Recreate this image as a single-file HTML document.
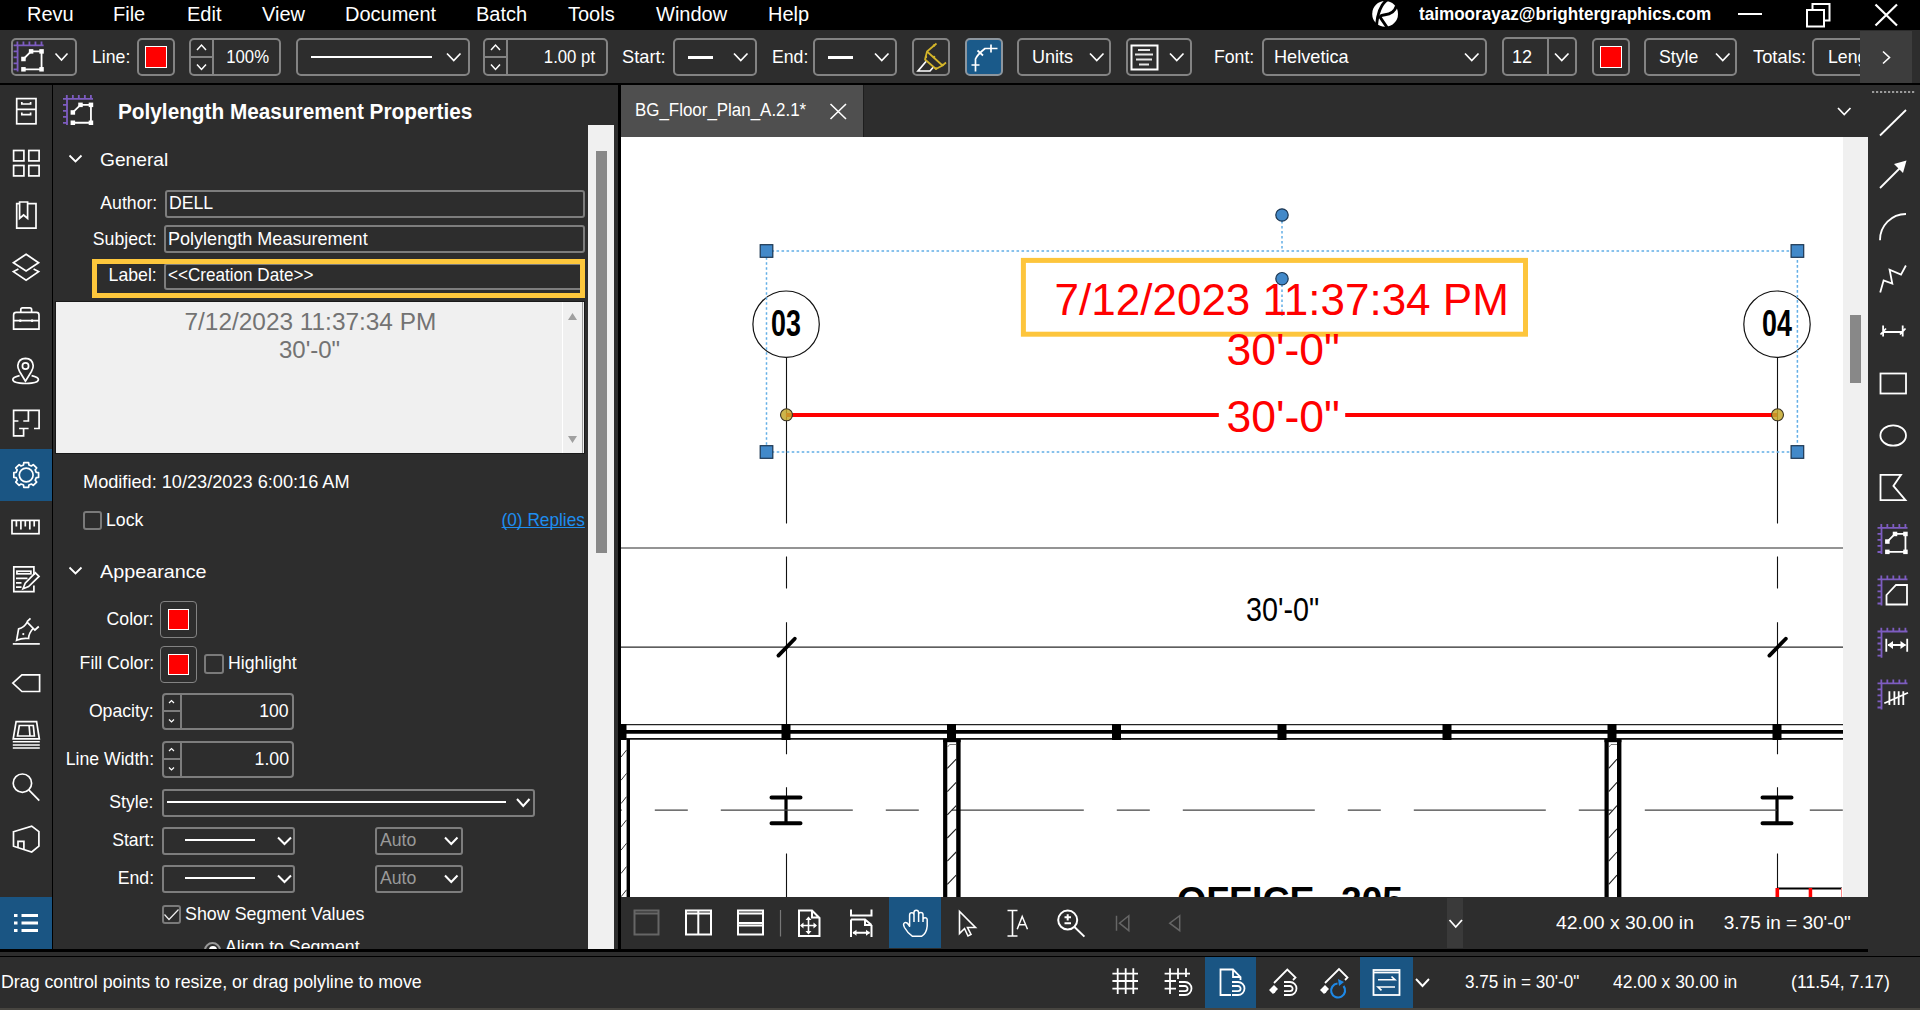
<!DOCTYPE html>
<html><head><meta charset="utf-8">
<style>
*{box-sizing:border-box;margin:0;padding:0}
html,body{width:1920px;height:1010px;overflow:hidden;background:#2d2d2d;font-family:"Liberation Sans",sans-serif;color:#fff;position:relative}
.a{position:absolute}
.t{position:absolute;white-space:nowrap;line-height:1}
svg{position:absolute;overflow:visible}
.btn{position:absolute;border:2px solid #838383;border-radius:5px}
.inp{position:absolute;border:2px solid #7d7d7d;border-radius:3px;background:#2d2d2d}
</style></head><body>
<div class="a" style="left:0px;top:0px;width:1920px;height:30px;background:#000;"></div>
<div class="t" style="left:27px;top:3.7px;font-size:20px;">Revu</div>
<div class="t" style="left:113px;top:3.7px;font-size:20px;">File</div>
<div class="t" style="left:187px;top:3.7px;font-size:20px;">Edit</div>
<div class="t" style="left:262px;top:3.7px;font-size:20px;">View</div>
<div class="t" style="left:345px;top:3.7px;font-size:20px;">Document</div>
<div class="t" style="left:476px;top:3.7px;font-size:20px;">Batch</div>
<div class="t" style="left:568px;top:3.7px;font-size:20px;">Tools</div>
<div class="t" style="left:656px;top:3.7px;font-size:20px;">Window</div>
<div class="t" style="left:768px;top:3.7px;font-size:20px;">Help</div>
<div class="t" style="left:1419px;top:4.4px;font-size:19px;font-weight:bold;transform:scaleX(0.9);transform-origin:0 0;">taimoorayaz@brightergraphics.com</div>
<svg style="left:0;top:0" width="1920" height="1010">
 <path d="M1738 14 H1762" stroke="#fff" stroke-width="2"/>
 <rect x="1807" y="10" width="17" height="16.5" stroke="#fff" stroke-width="2" fill="none"/>
 <path d="M1812.5 9 V4 H1829.5 V20.5 H1824.5" stroke="#fff" stroke-width="2" fill="none"/>
 <path d="M1875.5 4.5 L1897 25.5 M1897 4.5 L1875.5 25.5" stroke="#fff" stroke-width="2.2"/>
 <circle cx="1385.1" cy="13.9" r="12.9" fill="#fff"/>
 <path d="M1387.5 -0.5 C1381 4 1377.5 12 1376.5 26" stroke="#000" stroke-width="3" fill="none"/>
 <path d="M1396.5 6 C1394.5 12 1391 14.3 1385 14.8 C1382 15.1 1380.5 15.8 1380 17 L1387.5 28" stroke="#000" stroke-width="2.9" fill="none"/>
</svg>
<div class="a" style="left:0px;top:30px;width:1920px;height:53px;background:#2d2d2d;"></div>
<div class="a" style="left:0px;top:83px;width:1920px;height:2px;background:#000;"></div>
<div class="btn" style="left:11px;top:38px;width:66px;height:38px;"></div>
<svg style="left:0;top:0" width="1920" height="1010">
<g transform="translate(-49.4 -53.45)"><path d="M63 98.8 H93 M67 98 V125 M66.8 95 V98.5 M72.85 95 V98.5 M78.8 95 V98.5 M84.85 95 V98.5 M90.9 95 V98.5 M63 104.85 H67 M63 110.8 H67 M63 116.85 H67 M63 122.9 H67" stroke="#7d5cc0" stroke-width="1.8" fill="none"/></g><g transform="translate(-49.4 -53.45)"><path d="M72.85 112.45 L80.5 104.85 H90.95 V122.75 H72.85" stroke="#fff" stroke-width="1.8" fill="none"/><g fill="#fff"><rect x="70.6" y="110.2" width="4.5" height="4.5"/><rect x="78.25" y="102.6" width="4.5" height="4.5"/><rect x="88.7" y="102.6" width="4.5" height="4.5"/><rect x="88.7" y="120.5" width="4.5" height="4.5"/><rect x="70.6" y="120.5" width="4.5" height="4.5"/></g></g>
<path d="M55.5 53.5 L61.5 60.0 L67.5 53.5" stroke="#fff" stroke-width="1.6" fill="none"/></svg>
<div class="t" style="left:92px;top:47.2px;font-size:19px;transform:scaleX(0.93);transform-origin:0 0;">Line:</div>
<div class="btn" style="left:137px;top:38px;width:38px;height:38px;"></div>
<div class="a" style="left:145px;top:46px;width:22px;height:22px;background:#f00;border:1px solid #fff;"></div>
<div class="btn" style="left:189px;top:38px;width:92px;height:38px;"></div>
<div class="a" style="left:212px;top:39px;width:2px;height:36px;background:#838383;"></div>
<div class="a" style="left:190px;top:56px;width:23px;height:2px;background:#838383;"></div>
<div class="t" style="right:1650.5px;top:47.8px;font-size:18px;transform:scaleX(0.93);transform-origin:100% 0;">100%</div>
<div class="btn" style="left:296px;top:38px;width:174px;height:38px;"></div>
<div class="a" style="left:311px;top:56px;width:121px;height:2px;background:#fff;"></div>
<div class="btn" style="left:483px;top:38px;width:125px;height:38px;"></div>
<div class="a" style="left:506px;top:39px;width:2px;height:36px;background:#838383;"></div>
<div class="a" style="left:484px;top:56px;width:23px;height:2px;background:#838383;"></div>
<div class="t" style="right:1325px;top:47.8px;font-size:18px;transform:scaleX(0.93);transform-origin:100% 0;">1.00 pt</div>
<div class="t" style="left:622px;top:47.2px;font-size:19px;transform:scaleX(0.96);transform-origin:0 0;">Start:</div>
<div class="btn" style="left:673px;top:38px;width:84px;height:38px;"></div>
<div class="a" style="left:688px;top:56px;width:25px;height:3px;background:#fff;"></div>
<div class="t" style="left:772px;top:47.2px;font-size:19px;transform:scaleX(0.93);transform-origin:0 0;">End:</div>
<div class="btn" style="left:813px;top:38px;width:84px;height:38px;"></div>
<div class="a" style="left:828px;top:56px;width:25px;height:3px;background:#fff;"></div>
<div class="btn" style="left:912px;top:38px;width:38px;height:38px;"></div>
<div class="btn" style="left:965px;top:38px;width:38px;height:38px;background:#1a5a8a;border-color:#8d969e;"></div>
<div class="btn" style="left:1017px;top:38px;width:94px;height:38px;"></div>
<div class="t" style="left:1032px;top:47.2px;font-size:19px;transform:scaleX(0.95);transform-origin:0 0;">Units</div>
<div class="btn" style="left:1126px;top:38px;width:66px;height:38px;"></div>
<div class="t" style="left:1214px;top:47.2px;font-size:19px;transform:scaleX(0.93);transform-origin:0 0;">Font:</div>
<div class="btn" style="left:1262px;top:38px;width:225px;height:38px;"></div>
<div class="t" style="left:1274px;top:47.2px;font-size:19px;transform:scaleX(0.955);transform-origin:0 0;">Helvetica</div>
<div class="btn" style="left:1502px;top:37px;width:75px;height:39px;"></div>
<div class="a" style="left:1547px;top:38px;width:2px;height:37px;background:#838383;"></div>
<div class="t" style="left:1512px;top:47.2px;font-size:19px;transform:scaleX(0.95);transform-origin:0 0;">12</div>
<div class="btn" style="left:1592px;top:38px;width:38px;height:38px;"></div>
<div class="a" style="left:1600px;top:46px;width:22px;height:22px;background:#f00;border:1px solid #fff;"></div>
<div class="btn" style="left:1644px;top:38px;width:93px;height:38px;"></div>
<div class="t" style="left:1659px;top:47.2px;font-size:19px;transform:scaleX(0.93);transform-origin:0 0;">Style</div>
<div class="t" style="left:1752.5px;top:47.2px;font-size:19px;transform:scaleX(0.965);transform-origin:0 0;">Totals:</div>
<div class="a" style="left:1812px;top:38px;width:48px;height:38px;overflow:hidden"><div class="btn" style="left:0px;top:0px;width:80px;height:38px;"></div>
<div class="t" style="left:16px;top:9px;font-size:19px;transform:scaleX(0.93);transform-origin:0 0">Length</div></div>
<div class="a" style="left:1860px;top:31px;width:52px;height:52px;background:#3d3d3d;"></div>
<svg style="left:0;top:0" width="1920" height="1010"><path d="M197 50 L201.5 45 L206 50 M197 64.5 L201.5 69.5 L206 64.5 M491 50 L495.5 45 L500 50 M491 64.5 L495.5 69.5 L500 64.5" stroke="#fff" stroke-width="1.5" fill="none"/><path d="M447 53.5 L453.75 60.5 L460.5 53.5" stroke="#fff" stroke-width="1.7" fill="none"/><path d="M734 53.5 L740.75 60.5 L747.5 53.5" stroke="#fff" stroke-width="1.7" fill="none"/><path d="M875 53.5 L881.75 60.5 L888.5 53.5" stroke="#fff" stroke-width="1.7" fill="none"/><path d="M1090 53.5 L1096.75 60.5 L1103.5 53.5" stroke="#fff" stroke-width="1.7" fill="none"/><path d="M1170 53.5 L1176.75 60.5 L1183.5 53.5" stroke="#fff" stroke-width="1.7" fill="none"/><path d="M1465 53.5 L1471.75 60.5 L1478.5 53.5" stroke="#fff" stroke-width="1.7" fill="none"/><path d="M1555 53.5 L1561.75 60.5 L1568.5 53.5" stroke="#fff" stroke-width="1.7" fill="none"/><path d="M1716 53.5 L1722.75 60.5 L1729.5 53.5" stroke="#fff" stroke-width="1.7" fill="none"/><path d="M1883 51.5 L1889.5 57.5 L1883 63.5" stroke="#fff" stroke-width="1.6" fill="none"/>
 <g stroke="#d4b52a" stroke-width="1.7" fill="none" stroke-linejoin="round">
  <path d="M936.5 43.5 L927 51.5 L925 59.5 L936 69 L942.5 65.5 L946 62.5 M927 51.5 L942.5 65.5"/>
 </g>
 <g fill="#d4b52a"><circle cx="934" cy="45.5" r="1.2"/><circle cx="926" cy="57" r="1.2"/><circle cx="934" cy="57" r="1.3"/><circle cx="942.5" cy="65" r="1.3"/><circle cx="936" cy="68.5" r="1.2"/></g>
 <path d="M933 67.5 L930 71 H918 L926 61.5" stroke="#fff" stroke-width="1.7" fill="none"/>
 <g stroke="#fff" stroke-width="1.7" fill="none">
  <path d="M975.5 71.5 V59 Q977 55 985 48.5 H997.5 M971.5 65 H979.5 M991 44.5 V52.5 M977.5 50.5 L983 55.5"/>
 </g>
 <rect x="1131.5" y="45.5" width="26" height="24" stroke="#fff" stroke-width="2" fill="none"/>
 <path d="M1138 50 H1150 M1135 54.5 H1153 M1136 59.5 H1152 M1139 64.5 H1149" stroke="#e6e6e6" stroke-width="1.8"/>
</svg>
<div class="a" style="left:0px;top:85px;width:52px;height:864px;background:#2d2d2d;"></div>
<div class="a" style="left:52px;top:85px;width:1px;height:864px;background:#000;"></div>
<div class="a" style="left:0px;top:449px;width:52px;height:52px;background:#1a5583;"></div>
<div class="a" style="left:0px;top:897px;width:52px;height:52px;background:#1a5583;"></div>
<svg style="left:0;top:0" width="1920" height="1010">
<g stroke="#fff" stroke-width="1.7" fill="none">
 <rect x="16.7" y="98.6" width="19.3" height="25.2"/>
 <path d="M16.7 109.3 H36 M21.8 102 V104 H30.6 V102 M21.8 112.6 V114.6 H30.6 V112.6"/>
 <rect x="13.6" y="150.5" width="10.3" height="10.4"/><rect x="28.8" y="150.5" width="10.3" height="10.4"/>
 <rect x="13.6" y="165.5" width="10.3" height="10.4"/><rect x="28.8" y="165.5" width="10.3" height="10.4"/>
 <path d="M19.6 203.6 H16.7 V228.1 H36 V203.6 H27.6"/>
 <path d="M19.6 202 H27.6 V218.5 L23.6 215 L19.6 218.5 Z"/>
 <path d="M26.1 254.2 L38.6 262.7 L26.1 271 L13.4 262.7 Z M18.4 269 L13.4 271.6 L26.1 280.2 L38.6 271.6 L33.6 269"/>
 <path d="M13.6 329.1 V315 Q13.6 312.4 16.2 312.4 H36.4 Q39 312.4 39 315 V329.1 Z M20.8 312.4 V309.5 Q20.8 307.8 22.5 307.8 H29.9 Q31.6 307.8 31.6 309.5 V312.4 M13.6 320.6 H39"/>
 <path d="M25.5 381.2 L19.6 371.5 Q17.6 368 17.8 365.6 Q18.5 358.6 25.5 358.4 Q32.5 358.6 33.2 365.6 Q33.4 368 31.4 371.5 Z"/>
 <circle cx="25.5" cy="366" r="3.1"/>
 <path d="M19.6 375.6 Q12.8 377 12.8 379.6 Q12.8 383.5 25.8 383.5 Q38.4 383.5 38.4 379.6 Q38.4 377 31.6 375.6"/>
 <path d="M18.4 421 H13.6 V410.4 H39.1 V428.5 H34 M13.6 421 V435.8 H23.6 V428.5 H28.6 M19.1 428.5 H23.6 M28.4 410.4 V421 H23.3"/>
</g>
<g fill="#fff"><rect x="19.3" y="319.5" width="2" height="2.4"/><rect x="31.1" y="319.5" width="2" height="2.4"/></g>
<path fill="none" stroke="#fff" stroke-width="1.7" stroke-linejoin="round" d="M23.51 464.95 L23.80 462.63 L28.60 462.63 L28.89 464.95 L31.40 465.99 L33.25 464.55 L36.65 467.95 L35.21 469.80 L36.25 472.31 L38.57 472.60 L38.57 477.40 L36.25 477.69 L35.21 480.20 L36.65 482.05 L33.25 485.45 L31.40 484.01 L28.89 485.05 L28.60 487.37 L23.80 487.37 L23.51 485.05 L21.00 484.01 L19.15 485.45 L15.75 482.05 L17.19 480.20 L16.15 477.69 L13.83 477.40 L13.83 472.60 L16.15 472.31 L17.19 469.80 L15.75 467.95 L19.15 464.55 L21.00 465.99 Z"/>
<circle cx="26.2" cy="475" r="6.9" fill="none" stroke="#fff" stroke-width="1.7"/>
<g stroke="#fff" stroke-width="1.7" fill="none">
 <rect x="12" y="520.4" width="27" height="13.3"/>
 <path d="M16.4 521 V526.5 M20.9 521 V529.6 M25.3 521 V526.5 M29.8 521 V529.6 M34.2 521 V526.5"/>
 <path d="M33.9 575 V566.9 H13.8 V591.6 H33.9 V585.5"/>
 <rect x="16.9" y="571.2" width="14" height="2.6"/>
 <path d="M16 578.4 H27.5 M16 582.9 H21.5 M16 587.1 H21.5"/>
 <path d="M39 576.4 L35.3 572.8 L25.2 583.1 L23 588.8 L28.6 586.6 Z"/>
 <path d="M12.8 643.9 H39.8"/>
 <path d="M27.2 622.2 Q24 628 18.6 628.9 L16.6 640.3 Q22.6 637.6 28.6 638.5 Q28.6 633.5 33.2 628.3"/>
 <path d="M26.8 621.8 L30.5 618.3 M26.8 621.8 L34.9 630 L38.8 626.5"/>
 <path d="M12.8 683.1 L21.9 674.9 H39.6 V691.5 H21.9 Z"/>
 <path d="M16.1 721.7 H36.6 L39.3 738.9 H13.2 Z M19.3 725.5 H33.3 L34.4 736 H17.5 Z M29.1 725.5 L30 736"/>
 <path d="M12.8 741.7 H39.8 M12.8 744.9 H39.8 M12.8 748 H39.8" stroke-width="1.5"/>
 <circle cx="22.4" cy="783.2" r="9.2"/>
 <path d="M29 790.2 L39.3 800.6"/>
 <path d="M13.5 831.7 L31.7 826.1 L38.9 831.7 V846.2 L31.7 852 L13.5 846.2 Z"/>
 <path d="M18 848 V841.3 H23.9 V849.5"/>
</g>
<circle cx="23.3" cy="634.1" r="1.1" fill="#fff"/>
<g fill="#fff"><rect x="14" y="914" width="3.5" height="3"/><rect x="14" y="921.5" width="3.5" height="3"/><rect x="14" y="929" width="3.5" height="3"/>
<rect x="21.5" y="914" width="16.5" height="3"/><rect x="21.5" y="921.5" width="16.5" height="3"/><rect x="21.5" y="929" width="16.5" height="3"/></g>
</svg>
<div class="a" style="left:53px;top:85px;width:565px;height:864px;background:#2d2d2d;"></div>
<div class="a" style="left:618px;top:85px;width:3px;height:864px;background:#000;"></div>
<svg style="left:0;top:0" width="1920" height="1010">
<g transform="translate(0 0)"><path d="M63 98.8 H93 M67 98 V125 M66.8 95 V98.5 M72.85 95 V98.5 M78.8 95 V98.5 M84.85 95 V98.5 M90.9 95 V98.5 M63 104.85 H67 M63 110.8 H67 M63 116.85 H67 M63 122.9 H67" stroke="#7d5cc0" stroke-width="1.8" fill="none"/></g><g transform="translate(0 0)"><path d="M72.85 112.45 L80.5 104.85 H90.95 V122.75 H72.85" stroke="#fff" stroke-width="1.8" fill="none"/><g fill="#fff"><rect x="70.6" y="110.2" width="4.5" height="4.5"/><rect x="78.25" y="102.6" width="4.5" height="4.5"/><rect x="88.7" y="102.6" width="4.5" height="4.5"/><rect x="88.7" y="120.5" width="4.5" height="4.5"/><rect x="70.6" y="120.5" width="4.5" height="4.5"/></g></g>
 <path d="M69.5 155.5 L75.5 161.5 L81.5 155.5 M69.5 567.5 L75.5 573.5 L81.5 567.5" stroke="#fff" stroke-width="1.8" fill="none"/>
</svg>
<div class="t" style="left:118px;top:100.7px;font-size:22px;font-weight:bold;transform:scaleX(0.944);transform-origin:0 0;">Polylength Measurement Properties</div>
<div class="a" style="left:588px;top:125px;width:26px;height:824px;background:#f0f0f0;"></div>
<div class="a" style="left:596px;top:151px;width:11px;height:402px;background:#888;"></div>
<div class="t" style="left:99.6px;top:149.5px;font-size:19px;transform:scaleX(1.01);transform-origin:0 0;">General</div>
<div class="t" style="right:1763px;top:192.9px;font-size:19px;transform:scaleX(0.93);transform-origin:100% 0;">Author:</div>
<div class="inp" style="left:165px;top:190px;width:420px;height:28px"></div>
<div class="t" style="left:168.5px;top:192.9px;font-size:19px;transform:scaleX(0.93);transform-origin:0 0;">DELL</div>
<div class="t" style="right:1763px;top:229.1px;font-size:19px;transform:scaleX(0.93);transform-origin:100% 0;">Subject:</div>
<div class="inp" style="left:164px;top:225px;width:421px;height:28px"></div>
<div class="t" style="left:168.2px;top:229.1px;font-size:19px;transform:scaleX(0.95);transform-origin:0 0;">Polylength Measurement</div>
<div class="inp" style="left:164px;top:263px;width:421px;height:27px"></div>
<div class="a" style="left:92px;top:259px;width:492.5px;height:39px;background:transparent;border:5px solid #fdc73c;"></div>
<div class="t" style="right:1763px;top:264.9px;font-size:19px;transform:scaleX(0.93);transform-origin:100% 0;">Label:</div>
<div class="t" style="left:168.2px;top:264.9px;font-size:19px;transform:scaleX(0.9);transform-origin:0 0;">&lt;&lt;Creation Date&gt;&gt;</div>
<div class="a" style="left:55px;top:301px;width:530px;height:153px;background:#f0f0f0;border:1px solid #1a1a1a;"></div>
<div class="a" style="left:562px;top:302px;width:21px;height:151px;background:#f0f0f0;border-left:1px solid #fff;border-right:1px solid #9a9a9a;"></div>
<svg style="left:0;top:0" width="1920" height="1010"><path d="M568 320 L572.5 313 L577 320 Z M568 436 L572.5 443 L577 436 Z" fill="#a0a0a0"/></svg>
<div class="t" style="left:184.5px;top:309.8px;font-size:24.4px;color:#737373;">7/12/2023 11:37:34 PM</div>
<div class="t" style="left:279px;top:337.7px;font-size:24px;color:#737373;">30'-0"</div>
<div class="t" style="left:83.3px;top:472.1px;font-size:19px;transform:scaleX(0.956);transform-origin:0 0;">Modified: 10/23/2023 6:00:16 AM</div>
<div class="a" style="left:83px;top:511px;width:19px;height:19px;background:transparent;border:2px solid #7a7a7a;border-radius:3px;"></div>
<div class="t" style="left:106.4px;top:509.9px;font-size:19px;transform:scaleX(0.93);transform-origin:0 0;">Lock</div>
<div class="t" style="right:1335.6px;top:509.9px;font-size:19px;transform:scaleX(0.907);transform-origin:100% 0;color:#1e8ef0;text-decoration:underline;text-decoration-skip-ink:none;">(0) Replies</div>
<div class="t" style="left:99.6px;top:561.9px;font-size:19px;transform:scaleX(1.04);transform-origin:0 0;">Appearance</div>
<div class="t" style="right:1766px;top:608.7px;font-size:19px;transform:scaleX(0.93);transform-origin:100% 0;">Color:</div>
<div class="btn" style="left:160px;top:601px;width:37px;height:37px;border-width:1.5px;border-radius:4px;"></div>
<div class="a" style="left:168px;top:609px;width:21px;height:21px;background:#f00;border:1px solid #fff;"></div>
<div class="t" style="right:1766px;top:653.2px;font-size:19px;transform:scaleX(0.93);transform-origin:100% 0;">Fill Color:</div>
<div class="btn" style="left:160px;top:646px;width:37px;height:37px;border-width:1.5px;border-radius:4px;"></div>
<div class="a" style="left:168px;top:654px;width:21px;height:21px;background:#f00;border:1px solid #fff;"></div>
<div class="a" style="left:204px;top:654px;width:20px;height:20px;background:transparent;border:2px solid #7a7a7a;border-radius:3px;"></div>
<div class="t" style="left:228px;top:653.2px;font-size:19px;transform:scaleX(0.93);transform-origin:0 0;">Highlight</div>
<div class="t" style="right:1766px;top:700.9px;font-size:19px;transform:scaleX(0.93);transform-origin:100% 0;">Opacity:</div>
<div class="inp" style="left:162px;top:693px;width:132px;height:37px;border-radius:4px"></div>
<div class="a" style="left:180px;top:694px;width:2px;height:35px;background:#7d7d7d;"></div>
<div class="a" style="left:163px;top:710px;width:18px;height:2px;background:#7d7d7d;"></div>
<svg style="left:0;top:0" width="1920" height="1010"><path d="M169 703 L171.5 700.5 L174 703 M169 719.5 L171.5 722 L174 719.5" stroke="#fff" stroke-width="1.2" fill="none"/></svg>
<div class="t" style="right:1631px;top:700.9px;font-size:19px;transform:scaleX(0.93);transform-origin:100% 0;">100</div>
<div class="t" style="right:1766px;top:749.4px;font-size:19px;transform:scaleX(0.93);transform-origin:100% 0;">Line Width:</div>
<div class="inp" style="left:162px;top:741px;width:132px;height:37px;border-radius:4px"></div>
<div class="a" style="left:180px;top:742px;width:2px;height:35px;background:#7d7d7d;"></div>
<div class="a" style="left:163px;top:758px;width:18px;height:2px;background:#7d7d7d;"></div>
<svg style="left:0;top:0" width="1920" height="1010"><path d="M169 751 L171.5 748.5 L174 751 M169 767.5 L171.5 770 L174 767.5" stroke="#fff" stroke-width="1.2" fill="none"/></svg>
<div class="t" style="right:1631px;top:749.4px;font-size:19px;transform:scaleX(0.93);transform-origin:100% 0;">1.00</div>
<div class="t" style="right:1766px;top:791.6px;font-size:19px;transform:scaleX(0.93);transform-origin:100% 0;">Style:</div>
<div class="inp" style="left:162px;top:789px;width:373px;height:28px"></div>
<div class="a" style="left:167px;top:801px;width:339px;height:2px;background:#fff;"></div>
<svg style="left:0;top:0" width="1920" height="1010"><path d="M517 799 L523.25 806 L529.5 799" stroke="#fff" stroke-width="2" fill="none"/></svg>
<div class="t" style="right:1766px;top:830.2px;font-size:19px;transform:scaleX(0.93);transform-origin:100% 0;">Start:</div>
<div class="inp" style="left:162px;top:827px;width:133px;height:28px"></div>
<div class="a" style="left:184.5px;top:839px;width:70px;height:2px;background:#fff;"></div>
<div class="inp" style="left:374.5px;top:827px;width:88px;height:28px"></div>
<svg style="left:0;top:0" width="1920" height="1010"><path d="M278 837.5 L284.5 844.0 L291 837.5" stroke="#fff" stroke-width="2" fill="none"/><path d="M445 837.5 L451.25 844.0 L457.5 837.5" stroke="#fff" stroke-width="2" fill="none"/></svg>
<div class="t" style="left:379.6px;top:830.2px;font-size:19px;transform:scaleX(0.93);transform-origin:0 0;color:#999;">Auto</div>
<div class="t" style="right:1766px;top:868.2px;font-size:19px;transform:scaleX(0.93);transform-origin:100% 0;">End:</div>
<div class="inp" style="left:162px;top:865px;width:133px;height:28px"></div>
<div class="a" style="left:184.5px;top:877px;width:70px;height:2px;background:#fff;"></div>
<div class="inp" style="left:374.5px;top:865px;width:88px;height:28px"></div>
<svg style="left:0;top:0" width="1920" height="1010"><path d="M278 875.5 L284.5 882.0 L291 875.5" stroke="#fff" stroke-width="2" fill="none"/><path d="M445 875.5 L451.25 882.0 L457.5 875.5" stroke="#fff" stroke-width="2" fill="none"/></svg>
<div class="t" style="left:379.6px;top:868.2px;font-size:19px;transform:scaleX(0.93);transform-origin:0 0;color:#999;">Auto</div>
<div class="a" style="left:162px;top:905px;width:19px;height:19px;background:transparent;border:2px solid #7a7a7a;border-radius:3px;"></div>
<svg style="left:0;top:0" width="1920" height="1010"><path d="M164.5 914.5 L169 919.5 L178.5 909.5" stroke="#eee" stroke-width="1.2" fill="none"/></svg>
<div class="t" style="left:185px;top:903.9px;font-size:19px;transform:scaleX(0.94);transform-origin:0 0;">Show Segment Values</div>
<div class="a" style="left:53px;top:935px;width:535px;height:14px;overflow:hidden"><div class="t" style="left:172px;top:2px;font-size:19px;transform:scaleX(0.93);transform-origin:0 0">Align to Segment</div><div class="a" style="left:151px;top:6.5px;width:17px;height:17px;border:2px solid #999;border-radius:50%"></div><div class="a" style="left:155.5px;top:11px;width:8px;height:8px;background:#fff;border-radius:50%"></div></div>
<div class="a" style="left:621px;top:85px;width:1247px;height:52px;background:#2d2d2d;"></div>
<div class="a" style="left:621px;top:85px;width:242px;height:52px;background:#4f4f4f;"></div>
<div class="a" style="left:862.5px;top:85px;width:1px;height:52px;background:#1e1e1e;"></div>
<div class="t" style="left:634.6px;top:101.4px;font-size:18px;transform:scaleX(0.94);transform-origin:0 0;">BG_Floor_Plan_A.2.1*</div>
<svg style="left:0;top:0" width="1920" height="1010"><path d="M830.5 104 L846 119 M846 104 L830.5 119" stroke="#fff" stroke-width="1.6"/><path d="M1838 108 L1844.25 114.5 L1850.5 108" stroke="#fff" stroke-width="1.7" fill="none"/></svg>
<div class="a" style="left:621px;top:137px;width:1222px;height:760px;overflow:hidden"><svg style="left:-621px;top:-137px" width="1920" height="1010"><rect x="621" y="137" width="1222" height="760" fill="#fff"/><path d="M621 548 H1843 M621 647.2 H1843" stroke="#2a2a2a" stroke-width="1.2"/><path d="M786.5 357.5 V523.4 M786.5 556.4 V588.6 M786.5 622.3 V754.3 M786.5 787.3 V820.3 M786.5 853.6 V897" stroke="#111" stroke-width="1.1"/><path d="M778.4 655.6 L794.8 638.7" stroke="#000" stroke-width="3.8" stroke-linecap="round"/><path d="M771.5 797.6 H800.5 M771.5 823.2 H800.5" stroke="#000" stroke-width="4" stroke-linecap="round"/><path d="M786 797.6 V823.2" stroke="#000" stroke-width="3.2"/><path d="M1777.5 357.5 V523.4 M1777.5 556.4 V588.6 M1777.5 622.3 V754.3 M1777.5 787.3 V820.3 M1777.5 853.6 V897" stroke="#111" stroke-width="1.1"/><path d="M1769.4 655.6 L1785.8 638.7" stroke="#000" stroke-width="3.8" stroke-linecap="round"/><path d="M1762.5 797.6 H1791.5 M1762.5 823.2 H1791.5" stroke="#000" stroke-width="4" stroke-linecap="round"/><path d="M1777 797.6 V823.2" stroke="#000" stroke-width="3.2"/><path d="M489.8 810.2 H1843" stroke="#444" stroke-width="1.3" stroke-dasharray="132 33 33 33"/><path d="M621 724.7 H1843" stroke="#222" stroke-width="1.3"/><path d="M621 731.9 H1843" stroke="#000" stroke-width="3.6"/><path d="M621 738.9 H1843" stroke="#111" stroke-width="1.8"/><rect x="781.5" y="724" width="9" height="16" fill="#000"/><rect x="947.0" y="724" width="9" height="16" fill="#000"/><rect x="1112.0" y="724" width="9" height="16" fill="#000"/><rect x="1277.5" y="724" width="9" height="16" fill="#000"/><rect x="1442.5" y="724" width="9" height="16" fill="#000"/><rect x="1607.5" y="724" width="9" height="16" fill="#000"/><rect x="1772.5" y="724" width="9" height="16" fill="#000"/><rect x="621" y="724" width="5.5" height="16" fill="#000"/><rect x="626.6" y="739" width="3.4" height="160" fill="#000"/><path d="M621 757.0 L626.6 750.0" stroke="#333" stroke-width="1"/><path d="M621 780.3 L626.6 773.3" stroke="#333" stroke-width="1"/><path d="M621 803.6 L626.6 796.6" stroke="#333" stroke-width="1"/><path d="M621 826.9 L626.6 819.9" stroke="#333" stroke-width="1"/><path d="M621 850.2 L626.6 843.2" stroke="#333" stroke-width="1"/><path d="M621 873.5 L626.6 866.5" stroke="#333" stroke-width="1"/><path d="M621 896.8 L626.6 889.8" stroke="#333" stroke-width="1"/><path d="M621 920.1 L626.6 913.1" stroke="#333" stroke-width="1"/><rect x="943.1" y="739" width="4.2" height="160" fill="#000"/><rect x="956.2" y="739" width="4.4" height="160" fill="#000"/><rect x="943.1" y="739.4" width="17.5" height="2.8" fill="#000"/><path d="M947.6 747 L949.6 744.5 H956.2" stroke="#555" stroke-width="0.8" fill="none"/><path d="M947.3000000000001 768.4000000000001 L956.2 759.2" stroke="#222" stroke-width="1.1"/><path d="M947.3000000000001 791.6000000000001 L956.2 782.4000000000001" stroke="#222" stroke-width="1.1"/><path d="M947.3000000000001 814.8000000000001 L956.2 805.6" stroke="#222" stroke-width="1.1"/><path d="M947.3000000000001 838.0000000000001 L956.2 828.8000000000001" stroke="#222" stroke-width="1.1"/><path d="M947.3000000000001 861.2 L956.2 852.0" stroke="#222" stroke-width="1.1"/><path d="M947.3000000000001 884.4000000000001 L956.2 875.2" stroke="#222" stroke-width="1.1"/><path d="M947.3000000000001 907.6000000000001 L956.2 898.4000000000001" stroke="#222" stroke-width="1.1"/><rect x="1604.5" y="739" width="4.2" height="160" fill="#000"/><rect x="1617" y="739" width="4.4" height="160" fill="#000"/><rect x="1604.5" y="739.4" width="16.90000000000009" height="2.8" fill="#000"/><path d="M1609.0 747 L1611.0 744.5 H1617" stroke="#555" stroke-width="0.8" fill="none"/><path d="M1608.7 768.4000000000001 L1617 759.2" stroke="#222" stroke-width="1.1"/><path d="M1608.7 791.6000000000001 L1617 782.4000000000001" stroke="#222" stroke-width="1.1"/><path d="M1608.7 814.8000000000001 L1617 805.6" stroke="#222" stroke-width="1.1"/><path d="M1608.7 838.0000000000001 L1617 828.8000000000001" stroke="#222" stroke-width="1.1"/><path d="M1608.7 861.2 L1617 852.0" stroke="#222" stroke-width="1.1"/><path d="M1608.7 884.4000000000001 L1617 875.2" stroke="#222" stroke-width="1.1"/><path d="M1608.7 907.6000000000001 L1617 898.4000000000001" stroke="#222" stroke-width="1.1"/><path d="M1777 888.6 H1842" stroke="#000" stroke-width="2"/><rect x="1775.5" y="888" width="3.6" height="10" fill="#f00"/><rect x="1808.7" y="888" width="3.5" height="10" fill="#f00"/><rect x="1841" y="888" width="1" height="10" fill="#f88"/><circle cx="786.1" cy="324.2" r="33.2" fill="#fff" stroke="#111" stroke-width="1.2"/><circle cx="1777" cy="324.2" r="33.2" fill="#fff" stroke="#111" stroke-width="1.2"/><rect x="766.5" y="251" width="1030.9" height="201" fill="none" stroke="#62aee6" stroke-width="1.5" stroke-dasharray="2.6 2.4"/><path d="M1282 221 V251 M1282 284.5 V316" stroke="#62aee6" stroke-width="1.5" stroke-dasharray="2.6 2.4"/><path d="M786 415 H1218.8 M1345.2 415 H1777" stroke="#f00" stroke-width="4"/><rect x="1023.4" y="260.4" width="502.1" height="73.8" fill="none" stroke="#fdc53c" stroke-width="5"/></svg><div class="t" style="left:625.2px;top:456.2px;font-size:33.5px;transform:scaleX(0.857);transform-origin:0 0;color:#000;">30'-0"</div><div class="t" style="left:556px;top:745.1px;font-size:37.5px;font-weight:bold;color:#000;">OFFICE</div><div class="t" style="left:719.8px;top:745.1px;font-size:37.5px;font-weight:bold;transform:scaleX(0.99);transform-origin:0 0;color:#000;">205</div><div class="t" style="left:149.79999999999995px;top:169.3px;font-size:36.3px;font-weight:bold;transform:scaleX(0.74);transform-origin:0 0;color:#000;">03</div><div class="t" style="left:1140.7px;top:169.3px;font-size:36.3px;font-weight:bold;transform:scaleX(0.74);transform-origin:0 0;color:#000;">04</div><div class="t" style="left:433.5999999999999px;top:141.1px;font-size:44px;color:#f00;">7/12/2023 11:37:34 PM</div><div class="t" style="left:605.5px;top:191.3px;font-size:44.5px;color:#f00;">30'-0"</div><div class="t" style="left:605.5px;top:257.8px;font-size:44.5px;color:#f00;">30'-0"</div><svg style="left:-621px;top:-137px" width="1920" height="1010"><rect x="760.2" y="244.7" width="12.6" height="12.6" fill="#4289c9" stroke="#1b3550" stroke-width="1.2"/><rect x="1791.1000000000001" y="244.7" width="12.6" height="12.6" fill="#4289c9" stroke="#1b3550" stroke-width="1.2"/><rect x="760.2" y="445.7" width="12.6" height="12.6" fill="#4289c9" stroke="#1b3550" stroke-width="1.2"/><rect x="1791.1000000000001" y="445.7" width="12.6" height="12.6" fill="#4289c9" stroke="#1b3550" stroke-width="1.2"/><circle cx="1282" cy="215" r="6.2" fill="#4289c9" stroke="#1b3550" stroke-width="1.2"/><circle cx="1282" cy="278.7" r="6.2" fill="#4289c9" stroke="#1b3550" stroke-width="1.2"/><circle cx="786.5" cy="414.8" r="6" fill="#c4a82c" fill-opacity="0.85" stroke="#3a3220" stroke-width="1.1"/><circle cx="1777.5" cy="414.8" r="6" fill="#c4a82c" fill-opacity="0.85" stroke="#3a3220" stroke-width="1.1"/></svg></div>
<div class="a" style="left:1842.6px;top:137px;width:25.4px;height:760px;background:#f0f0f0;"></div>
<div class="a" style="left:1850px;top:315px;width:11px;height:68px;background:#888;"></div>
<div class="a" style="left:1868px;top:85px;width:52px;height:867px;background:#2d2d2d;"></div>
<svg style="left:0;top:0" width="1920" height="1010"><path d="M1872 92 H1915" stroke="#9a9a9a" stroke-width="2.2" stroke-dasharray="2.2 1.8"/><g stroke="#fff" stroke-width="1.8" fill="none"><path d="M1880 135.5 L1906 110"/><path d="M1880 188 L1900 168"/><path d="M1880 240.3 A26 26 0 0 1 1906 214"/><path d="M1880.2 292.4 L1883.6 280.4 L1892.3 283.7 L1889.6 269.7 L1901 274.6 L1905.9 265.5"/><path d="M1883.1 325.4 V336.5 M1902.7 325.4 V336.5 M1883 332 H1903 M1880.5 334.5 L1886 328.5 M1900 334.5 L1905.5 328.5"/><rect x="1880.5" y="373.5" width="25.5" height="20"/><ellipse cx="1893.2" cy="435.5" rx="12.8" ry="10.2"/><path d="M1880.5 474.8 H1901 L1893.4 485.9 L1905.5 500.2 H1880.5 Z"/></g><path d="M1906.5 160.5 L1894 164 L1903 173 Z" fill="#fff"/><g transform="translate(1814.5 429.09999999999997)"><path d="M63 98.8 H93 M67 98 V125 M66.8 95 V98.5 M72.85 95 V98.5 M78.8 95 V98.5 M84.85 95 V98.5 M90.9 95 V98.5 M63 104.85 H67 M63 110.8 H67 M63 116.85 H67 M63 122.9 H67" stroke="#7d5cc0" stroke-width="1.8" fill="none"/></g><g transform="translate(1814.5 480.59999999999997)"><path d="M63 98.8 H93 M67 98 V125 M66.8 95 V98.5 M72.85 95 V98.5 M78.8 95 V98.5 M84.85 95 V98.5 M90.9 95 V98.5 M63 104.85 H67 M63 110.8 H67 M63 116.85 H67 M63 122.9 H67" stroke="#7d5cc0" stroke-width="1.8" fill="none"/></g><g transform="translate(1814.5 532.7)"><path d="M63 98.8 H93 M67 98 V125 M66.8 95 V98.5 M72.85 95 V98.5 M78.8 95 V98.5 M84.85 95 V98.5 M90.9 95 V98.5 M63 104.85 H67 M63 110.8 H67 M63 116.85 H67 M63 122.9 H67" stroke="#7d5cc0" stroke-width="1.8" fill="none"/></g><g transform="translate(1814.5 584.6)"><path d="M63 98.8 H93 M67 98 V125 M66.8 95 V98.5 M72.85 95 V98.5 M78.8 95 V98.5 M84.85 95 V98.5 M90.9 95 V98.5 M63 104.85 H67 M63 110.8 H67 M63 116.85 H67 M63 122.9 H67" stroke="#7d5cc0" stroke-width="1.8" fill="none"/></g><g transform="translate(1814.5 429.1)"><path d="M72.85 112.45 L80.5 104.85 H90.95 V122.75 H72.85" stroke="#fff" stroke-width="1.8" fill="none"/><g fill="#fff"><rect x="70.6" y="110.2" width="4.5" height="4.5"/><rect x="78.25" y="102.6" width="4.5" height="4.5"/><rect x="88.7" y="102.6" width="4.5" height="4.5"/><rect x="88.7" y="120.5" width="4.5" height="4.5"/><rect x="70.6" y="120.5" width="4.5" height="4.5"/></g></g><path d="M1886.5 604.5 V595 L1896 585 H1907 V604.5 Z" stroke="#fff" stroke-width="1.8" fill="none"/><path d="M1886.3 638.8 V651.7 M1907.2 638.8 V651.7 M1888 645 H1905.5" stroke="#fff" stroke-width="1.8" fill="none"/><path d="M1887.5 645 L1893 641 V649 Z M1906 645 L1900.5 641 V649 Z" fill="#fff"/><path d="M1889.4 691.3 V705.1 M1894.4 691.3 V705.1 M1898.7 691.3 V705.1 M1903.3 691.3 V705.1 M1884.3 703.2 L1908 692.7" stroke="#fff" stroke-width="1.8" fill="none"/></svg>
<div class="a" style="left:621px;top:897px;width:1247px;height:52px;background:#2d2d2d;"></div>
<div class="a" style="left:889px;top:897px;width:52px;height:51px;background:#1a5583;"></div>
<div class="a" style="left:1447px;top:898px;width:16px;height:50px;background:#3a3a3a;"></div>
<div class="a" style="left:0px;top:949px;width:1868px;height:3px;background:#000;"></div>
<div class="a" style="left:1868px;top:949px;width:52px;height:3px;background:#2d2d2d;"></div>
<div class="a" style="left:0px;top:952px;width:1920px;height:4px;background:#2d2d2d;"></div>
<div class="a" style="left:0px;top:955.5px;width:1920px;height:1.5px;background:#000;"></div>
<svg style="left:0;top:0" width="1920" height="1010"><g stroke="#fff" stroke-width="2" fill="none"><rect x="634.5" y="910.5" width="24" height="24" stroke="#666"/><path d="M635 913.5 H658" stroke="#666"/><rect x="686" y="910.5" width="25" height="24"/><path d="M698.3 911 V934 M686.5 913.5 H710.5"/><rect x="738" y="910.5" width="25" height="24"/><path d="M738.5 913.5 H762.5 M738.5 923 H762.5 M738.5 925.5 H762.5"/><path d="M780.5 910 V936.5" stroke="#777" stroke-width="1.2"/><path d="M799 910.5 H812 L819.5 918 V936 H799 Z M812 910.5 V917.5 H819.5"/><path d="M808.5 918 V933 M801 925.5 H816" stroke-width="1.6"/><path d="M851 909.5 V915.5 H871.5 V909.5 M851 919.5 V937 M871.5 925 V937 M851 919.5 H865 L871.5 925 M865 919.5 V925 H871.5 M853 932.8 H869.5"/><path d="M912.5 936.3 Q907.5 933 904.5 927.5 Q902.5 923.5 904.8 922.6 Q906.8 922 908.4 924.5 L909.6 926.3 V915 A2.2 2.2 0 0 1 914 915 V912.6 A2.3 2.3 0 0 1 918.6 912.6 V914.6 A2.2 2.2 0 0 1 923 914.6 V919.8 A2.1 2.1 0 0 1 927.2 919.8 V926 Q926.6 933.5 921.5 936.3 Z M914 915 V922 M918.6 914.6 V922 M923 919.8 V922" stroke-width="1.5" stroke-linejoin="round"/><path d="M959.5 911.5 V933.5 L964.5 928.5 L968 936 L971 934.5 L967.5 927.5 L975.5 927.5 Z" stroke-width="1.6"/><path d="M1007.5 910.5 H1017.5 M1007.5 936 H1017.5 M1012.5 910.5 V936" stroke-width="1.6"/><path d="M1017.2 929.2 L1022.2 916.4 L1027.5 929.2 M1019 924.8 H1025.6" stroke-width="1.5"/><circle cx="1067.7" cy="920.1" r="9.5"/><path d="M1074.5 927 L1084.4 936.6 M1067.7 914.2 V920.5 M1064.5 917.3 H1071 M1064.5 923.3 H1071" /><path d="M1116.5 915.7 V930.7 M1128.8 915.7 V930.7 L1119.5 923.2 Z" stroke="#666" stroke-width="1.5"/><path d="M1179.7 915.7 V930.7 L1169.7 923.2 Z" stroke="#666" stroke-width="1.5"/></g><path d="M808.5 916.5 L805.5 920 H811.5 Z M808.5 934.5 L805.5 931 H811.5 Z M800 925.5 L803.5 922.5 V928.5 Z M817 925.5 L813.5 922.5 V928.5 Z M852.5 932.8 L856.5 929.8 V935.8 Z M870 932.8 L866 929.8 V935.8 Z" fill="#fff"/><path d="M1449.5 920 L1455.75 927 L1462.0 920" stroke="#fff" stroke-width="1.8" fill="none"/></svg>
<div class="t" style="left:1555.5px;top:912.7px;font-size:19px;transform:scaleX(1.02);transform-origin:0 0;">42.00 x 30.00 in</div>
<div class="t" style="left:1723.75px;top:912.7px;font-size:19px;">3.75 in = 30'-0"</div>
<div class="a" style="left:0px;top:957px;width:1920px;height:51px;background:#2d2d2d;"></div>
<div class="a" style="left:0px;top:1007.5px;width:1920px;height:2.5px;background:#474540;"></div>
<div class="t" style="left:1.2px;top:972.8px;font-size:18px;transform:scaleX(0.987);transform-origin:0 0;">Drag control points to resize, or drag polyline to move</div>
<div class="a" style="left:1204.5px;top:957px;width:51.3px;height:50.5px;background:#1a5583;"></div>
<div class="a" style="left:1360.3px;top:957px;width:52.3px;height:50.5px;background:#1a5583;"></div>
<svg style="left:0;top:0" width="1920" height="1010"><g stroke="#fff" stroke-width="1.8" fill="none"><path d="M1117.7 968.3 V994 M1125.7 968.3 V994 M1133.3 968.3 V994 M1112.4 973.6 H1138 M1112.4 981 H1138 M1112.4 988.6 H1138"/><path d="M1170 968.3 V994 M1178 968.3 V979 M1186 968.3 V977 M1164.6 973.6 H1190 M1164.6 981 H1176 M1164.6 988.6 H1176"/><path d="M1179 982 H1185 A6.5 6.5 0 0 1 1185 995 H1179 M1179 986 H1185 A2.6 2.6 0 0 1 1185 991.2 H1179" stroke-width="1.8"/><path d="M1231 995 H1220.5 V969.5 H1233 L1240.5 977 V980 M1233 969.5 V977 H1240.5"/><path d="M1232 982 H1238 A6.5 6.5 0 0 1 1238 995 H1232 M1232 986 H1238 A2.6 2.6 0 0 1 1238 991.2 H1232"/><path d="M1274 983 L1287.3 969.5 L1295.5 977.5 L1293 980 M1271.5 989 L1275 992.5"/><path d="M1284 982 H1290 A6.5 6.5 0 0 1 1290 995 H1284 M1284 986 H1290 A2.6 2.6 0 0 1 1290 991.2 H1284"/><path d="M1325 983 L1339 969 L1347.5 977.5 L1345 980 M1322.5 989 L1326 992.5"/><rect x="1373.5" y="970" width="26" height="25"/><path d="M1374 972.5 H1399"/><path d="M1378 979.8 H1395 L1391.5 976.5 M1395 987 H1378 L1381.5 990.3" stroke-width="1.6"/></g><path d="M1269 990 L1274 985 L1278 989 L1273 994 Z M1320 990 L1325 985 L1329 989 L1324 994 Z" fill="#fff"/><path d="M1337.5 983.5 A7 7 0 1 0 1343.5 986" stroke="#1e88e5" stroke-width="2.2" fill="none"/><path d="M1338 979 L1344 982 L1339 986 Z" fill="#1e88e5"/><path d="M1416 979 L1422.5 986 L1429 979" stroke="#fff" stroke-width="1.9" fill="none"/></svg>
<div class="t" style="left:1465px;top:971.9px;font-size:19px;transform:scaleX(0.9);transform-origin:0 0;">3.75 in = 30'-0"</div>
<div class="t" style="left:1613.25px;top:971.9px;font-size:19px;transform:scaleX(0.919);transform-origin:0 0;">42.00 x 30.00 in</div>
<div class="t" style="left:1791.25px;top:971.9px;font-size:19px;transform:scaleX(0.929);transform-origin:0 0;">(11.54, 7.17)</div>
</body></html>
